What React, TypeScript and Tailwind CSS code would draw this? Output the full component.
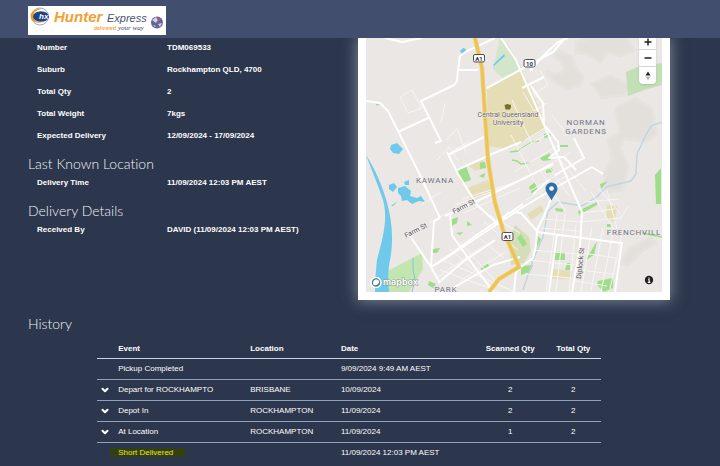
import { ChevronDown } from 'lucide-react';

interface Detail {
  label: string;
  value: string;
}

interface HistoryRow {
  event: string;
  location?: string;
  date: string;
  scanned?: number;
  total?: number;
  expandable?: boolean;
  highlight?: boolean;
}

const summary: Detail[] = [
  { label: 'Number', value: 'TDM069533' },
  { label: 'Suburb', value: 'Rockhampton QLD, 4700' },
  { label: 'Total Qty', value: '2' },
  { label: 'Total Weight', value: '7kgs' },
  { label: 'Expected Delivery', value: '12/09/2024 - 17/09/2024' }
];

const history: HistoryRow[] = [
  { event: 'Pickup Completed', date: '9/09/2024 9:49 AM AEST' },
  { event: 'Depart for ROCKHAMPTO', location: 'BRISBANE', date: '10/09/2024', scanned: 2, total: 2, expandable: true },
  { event: 'Depot In', location: 'ROCKHAMPTON', date: '11/09/2024', scanned: 2, total: 2, expandable: true },
  { event: 'At Location', location: 'ROCKHAMPTON', date: '11/09/2024', scanned: 1, total: 2, expandable: true },
  { event: 'Short Delivered', date: '11/09/2024 12:03 PM AEST', highlight: true }
];

function Logo() {
  return (
    <svg viewBox="28 6 138 29" className="block h-[29px] w-[138px] bg-white" role="img" aria-label="Hunter Express">
      <circle cx="40" cy="16.5" r="8.5" fill="#fff" stroke="#8d96ab" strokeWidth="0.8" />
      <path d="M30.500 16c0-5 6-8.500 13-7-5 0-10 2-10 7s4 6.500 10 6.500c-6 1.500-13-1-13-6.500z" fill="#ee9a2d" />
      <ellipse cx="41" cy="16.5" rx="8" ry="5.2" fill="#1f4580" />
      <text x="39" y="19" fontSize="8" fontWeight="700" fontStyle="italic" fill="#fff" fontFamily="Liberation Sans, sans-serif">hx</text>
      <text x="54" y="22" fontSize="15" fontWeight="700" fontStyle="italic" fill="#f2a032" fontFamily="Liberation Sans, sans-serif">Hunter</text>
      <text x="107" y="22" fontSize="11" fontStyle="italic" fill="#4c5275" fontFamily="Liberation Sans, sans-serif">Express</text>
      <text x="94" y="30" fontSize="5" fontWeight="700" fontStyle="italic" fill="#f2a94a" fontFamily="Liberation Sans, sans-serif">delivered</text>
      <text x="118" y="30" fontSize="7" fontWeight="400" fontStyle="italic" fill="#3a4070" fontFamily="Liberation Serif, serif">your way</text>
      <circle cx="157" cy="22.5" r="6" fill="#62659a" />
      <path d="M152 20l4-3 2 3-2 3zM158 24l4-1-2 4zM153 25l3 1-1 1z" fill="#d5cfe0" />
      <path d="M157 17l4 3-3 2z" fill="#a4616f" />
    </svg>
  );
}

function MapView() {
  return (
    <svg viewBox="366 38 296 254" className="block w-full" role="img" aria-label="Delivery location map">
      <rect x="366" y="38" width="296" height="254" fill="#eae7e4" />

      {/* Hills */}
      <g fill="#dfdbd5" opacity="0.6" strokeLinejoin="round" stroke="#e4e0db" strokeWidth="3">
        <path d="M560 51l12 6 4 12 7 8-3 8-13 4-14-8-6-9 9 3 8-4-2-9-8-6z" />
        <path d="M576 42l16-4h34l8 12-14 6-12-4-8 10-12-8-12-2z" />
        <path d="M592 84l18-8 22 10-8 9-22 3zM616 108l20-10 16 12 4 24-10 8-22-4-4 10 8 18-6 24-14 2-4-18 8-16-4-18 12-8zM630 248l20-10 6 5-14 8-14 14-8-2z" />
      </g>

      {/* Parks and campus */}
      <path d="M487 87l34-19 27 60-40 21-20-3z" fill="#e5ddb5" />
      <path d="M500 38l9 8 12 21-16 13-12-11z" fill="#d3e5cb" />
      <path d="M626 72l14-6 22-3v22l-18 5-16 6z" fill="#c2dfb6" />
      <path d="M384 273l38-20 1 16-14 23h-27z" fill="#c3e5b0" />
      <path d="M509 241l6-16 14 12 2 14-7 12-13 2z" fill="#d5dfb7" />
      <path d="M468 188l20-8 4 12-22 9zM607 205l10 1-2 16-9-3zM552 269l20 2v8h-20zM527 214l14-9 3 6-13 9zM468 165l15-5 4 7-12 4z" fill="#e5ddb5" />
      <g fill="#9ede89">
        <path d="M457 170l9-4 5 14-9 3zM480 163l5-1 1 6-6 1zM479 176l6-3-1 5zM450 220l8-3-1 6-7 4zM467 221l5 4-5 1zM456 233l7-1-3 3zM480 268l8-5 1 4-7 3zM433 249l7-1-3 5h-4zM429 281l7 3-3 4-5-3z" />
        <path d="M544 134l8-2-2 5-6 1zM540 158l10-5 1 7-8 1zM529 187l6-5 5 8-8 4zM546 170l6-2 1 4-7 1zM560 145h8v2h-8zM578 211l19-9v3l-18 10zM600 184l8-3-7 8zM555 208l8 1v3l-7-1zM553 252h12v8h-12zM567 263h3v7h-5zM538 236l3 3-5 11zM597 241l-3 14-8 5 2-4zM598 281l15-3v10l-9 4-7-7zM521 266l12-1-3 7-9 3zM517 238l4-4 6 10-4 3zM607 224h4v3h-4zM655 175l6-7v36h-5z" />
      </g>
      <g fill="none" stroke="#9ede89" strokeWidth="1.500">
        <path d="M510 152l8-1 6-4 8-5 7-1M512 160l5 1 4 3 9-1M376 105l3-1" />
        <path d="M642 233l20 4" />
      </g>

      {/* Water */}
      <path d="M366 155c6 16 13 32 17 45 6 21-2 43-6 60-1 9-2 21-2 32h14c-1-12-1-23 1-32 4-20 2-41-4-61-5-16-12-32-20-44z" fill="#6fc9ea" />
      <path d="M389 185l5-2 3 4-4 5-4-3zM404 182l5-2v5h-4zM398 188l7-2 6 5-1 5 7 2 4-2 4 6-6-1-7 3-5-4-5 1-1-5-3-3zM391 206l7-5-5 5z" fill="#6fc9ea" />
      <path d="M391 145l6-2 6 6-4 5-6-1-3-4zM460 51l3-3 3 1-1 4-3 1zM493 65l8-8 3-3 1 2-9 8-2 2z" fill="#6fc9ea" />
      <path d="M413 258v12l2 9-3 13" fill="none" stroke="#80c7dc" />
      <path d="M662 122l-11 4-5 9-9 19-1 20-5 7-25 6-8 9-16 10-24-4-10 9-5 26-10 23-10 30" fill="none" stroke="#bdd4e2" strokeWidth="1.300" />

      {/* Minor streets */}
      <g fill="none" stroke="#f7f6f4" strokeWidth="1">
        <path d="M400 97l12-7 10 18-14 5zM447 140l10-12 9 25M452 151l18-10M441 123l4-20M437 160l12-13 10 15M421 205l20-13M429 223l18-10M455 205l60-22M462 199l51-16M464 213l56-25M440 270l60 22M440 259l75 33M450 249l40 36M460 242l38 42M472 232l32 26M484 222l34 28M490 215l30 18M438 277l45-31M460 281l45-29" />
        <path d="M525 140l20-12M520 150l31-18M514 172l45-27M521 181l50-29M530 191l43-26M526 200l42-25M548 188l15 20M540 170l25 40M560 160l26 31M548 165l21 31M511 135l32 63M523 92l11 19 13-8M540 70l8 15-14 9 11 10M552 115l16 21M512 100l20 44" />
        <path d="M543 219l37 3M541 228l38 3M557 214l-11 78M565 214l-9 78M576 225l-7 67M592 227l-11 65M603 228l-12 63M614 228l-13 64M623 229l-13 60M532 250l45 4M529 260l45 5M525 274l47 4M580 222l41-4M580 213l35-4M584 202l35-3M591 192l24 39M599 189l21 24M582 253l34 5M580 270l33 4M575 281l32 5M620 220l8-14M607 190l10 39" />
      </g>

      {/* Main streets */}
      <g fill="none" stroke="#fff" strokeWidth="2" strokeLinejoin="round">
        <path d="M366 101l14 2 8 8 10 20 22 44 20 43M385 38l17 4 20-4M398 132l30-14M478 70h-20l-1 11-3 4-33 16 20 40-6 2M458 70l2-14 7-5 28-13M440 218l-6 3-3 46 9 16M410 236l21 31 9-5 83-55 30-18 39-22 11 7M431 267l20-13 27-20 45-30M447 152l11 22 19 31 21 19 11-12M457 170l35-16 29-12M445 216l12-5 96-47M450 212l2 23 11 16 31 42M448 155l16-8 24-12" />
        <path d="M501 38l15 22 42 97 24 55-2 34-8 46M487 88l66-36 12-14M530 71l12-14 16-15 10-4M522 88l22-11M531 86l12 17 1 21 14 18 1 8-10 8 15-1 12 13M551 199l-7 17-7 14-1 15-3 13-12 9-5 5-2 20M537 232l84 11M557 235l-8 57M622 242l-7 50M512 212l9 1 16 18M495 240l-31 21-26 22M451 289l42-24 27-8M574 138l10 20-29 17M533 194l17-15" />
      </g>
      <path d="M475 38l7 30 3 47 3 45 7 43 8 27 16 37-20 12-10 13" fill="none" stroke="#f1d28a" strokeWidth="4.500" />
      <path d="M475 38l7 30 3 47 3 45 7 43 8 27 16 37-20 12-10 13" fill="none" stroke="#edc452" strokeWidth="3" />

      {/* Route shields */}
      <g fill="#fff" stroke="#4d4d55" strokeWidth="1">
        <rect x="473.500" y="54.500" width="11" height="7.500" rx="1.500" />
        <rect x="524" y="59.500" width="11" height="7.500" rx="1.500" />
        <rect x="502" y="232.500" width="11" height="8" rx="1.500" />
      </g>
      <g fill="#33333a" fontFamily="Roboto, sans-serif" fontSize="6" fontWeight="700" textAnchor="middle">
        <text x="479" y="60.500">A1</text>
        <text x="529.500" y="65.500">10</text>
        <text x="507.500" y="239">A1</text>
      </g>

      {/* Place names */}
      <g fill="#6b6760" fontFamily="Roboto, sans-serif" fontSize="7" textAnchor="middle" stroke="#f2efe6" strokeWidth="1" paintOrder="stroke">
        <text x="508" y="117">Central Queensland</text>
        <text x="508" y="125">University</text>
      </g>
      <path d="M504.500 105l3-1 3.500 1v2l-1 2.500h-4.500z" fill="#76702c" />
      <g className="tracking-widest" fill="#74748b" fontFamily="Roboto, sans-serif" fontSize="8" textAnchor="middle">
        <text x="586" y="125">NORMAN</text>
        <text x="586" y="134">GARDENS</text>
        <text x="435" y="183">KAWANA</text>
        <text x="634" y="235">FRENCHVILL</text>
        <text x="446" y="292">PARK</text>
      </g>
      <g fill="#55555a" fontFamily="Roboto, sans-serif" fontSize="7" stroke="#f4f2ef" strokeWidth="1" paintOrder="stroke">
        <text transform="translate(454 214) rotate(-27)">Farm St</text>
        <text transform="translate(406 238) rotate(-27)">Farm St</text>
        <text transform="translate(581 279) rotate(-84)">Diplock St</text>
      </g>

      {/* Delivery pin */}
      <path d="M551.500 200.500c-1.500-4-6-8-6-12a6 6 0 0 1 12 0c0 4-4.500 8-6 12z" fill="#2f6fa8" />
      <circle cx="551.500" cy="188.500" r="2.300" fill="#fff" />

      {/* Attribution */}
      <circle cx="376" cy="282.500" r="5" fill="#4a7f91" stroke="#fff" strokeWidth="1.500" />
      <path d="M373.500 285c-1-3 0-5.500 3-5.500 2 0 3 1.500 2.500 3-.5 2-3 3-5.500 2.500z" fill="#fff" />
      <text x="383" y="285" fill="#fff" stroke="#8b9a8f" strokeWidth="1" paintOrder="stroke" fontFamily="Inter, sans-serif" fontSize="9" fontWeight="600">mapbox</text>
      <circle cx="649" cy="280" r="4.200" fill="#222" />
      <path d="M649 277.500v1.200M648 279.700h1.200v2.500M647.800 282.400h2.600" stroke="#fff" strokeWidth="1.100" fill="none" />
    </svg>
  );
}

function MapControls() {
  return (
    <div className="absolute top-0 right-[14px] flex w-[17px] flex-col overflow-hidden rounded-b-sm bg-white shadow">
      <button type="button" aria-label="Zoom in" className="flex h-3 items-start justify-center border-b border-gray-300">
        <svg viewBox="0 0 8 8" className="h-2 w-2"><path d="M0.500 4h7M4 0.500v7" stroke="#222" strokeWidth="1.500" /></svg>
      </button>
      <button type="button" aria-label="Zoom out" className="flex h-[17px] items-center justify-center border-b border-gray-300">
        <svg viewBox="0 0 8 8" className="h-2 w-2"><path d="M0.500 4h7" stroke="#222" strokeWidth="1.500" /></svg>
      </button>
      <button type="button" aria-label="Reset bearing to north" className="flex h-[17px] items-center justify-center">
        <svg viewBox="0 0 8 10" className="h-[10px] w-2">
          <path d="M4 0.500L6.500 4.500h-5z" fill="#222" />
          <path d="M4 9.500L6.500 5.500h-5z" fill="#bbb" />
        </svg>
      </button>
    </div>
  );
}

function DetailList({ items }: { items: Detail[] }) {
  return (
    <dl className="mb-[9px] flex flex-col gap-2 px-[9px] leading-[14px] font-bold">
      {items.map((item) => (
        <div key={item.label} className="grid grid-cols-[5fr_7fr]">
          <dt>{item.label}</dt>
          <dd>{item.value}</dd>
        </div>
      ))}
    </dl>
  );
}

function Heading({ children }: { children: string }) {
  return (
    <h2 className="font-['Lato',sans-serif] text-[14px] leading-6 font-light text-slate-100 [font-variant-ligatures:none]">
      {children}
    </h2>
  );
}

export default function App() {
  return (
    <div className="min-h-screen bg-[#2c364d] font-['Liberation_Sans',Arial,sans-serif] text-[8px] leading-3 text-white">
      <header className="sticky top-0 z-10 flex h-[38px] items-center bg-[#414e6d] px-7 pt-[3px]">
        <a href="#home"><Logo /></a>
      </header>

      <main className="pr-[50px] pl-7">
        <div className="grid grid-cols-[330fr_312fr]">
          <section className="pt-[3px]">
            <DetailList items={summary} />
            <Heading>Last Known Location</Heading>
            <DetailList items={[{ label: 'Delivery Time', value: '11/09/2024 12:03 PM AEST' }]} />
            <Heading>Delivery Details</Heading>
            <DetailList items={[{ label: 'Received By', value: 'DAVID (11/09/2024 12:03 PM AEST)' }]} />
          </section>

          <section className="relative bg-white px-2 pb-2 shadow-[0_0_14px_1px_#7d8594]">
            <MapView />
            <MapControls />
          </section>
        </div>

        <section className="pt-3">
          <Heading>History</Heading>
          <table className="mx-auto w-[78.5%] table-fixed border-collapse text-left">
            <colgroup>
              <col className="w-[4%]" />
              <col className="w-[26%]" />
              <col className="w-[18%]" />
              <col className="w-[27%]" />
              <col className="w-[14%]" />
              <col className="w-[11%]" />
            </colgroup>
            <thead>
              <tr className="h-[22px] border-b border-slate-300">
                <th></th>
                <th className="pt-1 pl-px">Event</th>
                <th className="pt-1 pl-0.5">Location</th>
                <th className="pt-1 pl-0.5">Date</th>
                <th className="pt-1 text-center">Scanned Qty</th>
                <th className="pt-1 text-center">Total Qty</th>
              </tr>
            </thead>
            <tbody>
              {history.map((row) => (
                <tr key={row.event} className="h-[21px] border-b border-slate-400 last:border-b-0">
                  <td>
                    {row.expandable && (
                      <button type="button" aria-label={`Expand ${row.event}`} className="flex w-4 justify-center">
                        <ChevronDown className="h-[10px] w-[10px]" strokeWidth={5} />
                      </button>
                    )}
                  </td>
                  <td className="pl-px">
                    {row.highlight ? (
                      <mark className="-ml-2 bg-[#344014] pr-3 pl-2 text-[#e5e832]">{row.event}</mark>
                    ) : (
                      row.event
                    )}
                  </td>
                  <td className="pl-0.5">{row.location}</td>
                  <td className="pl-0.5">{row.date}</td>
                  <td className="text-center">{row.scanned}</td>
                  <td className="text-center">{row.total}</td>
                </tr>
              ))}
            </tbody>
          </table>
        </section>
      </main>
    </div>
  );
}
